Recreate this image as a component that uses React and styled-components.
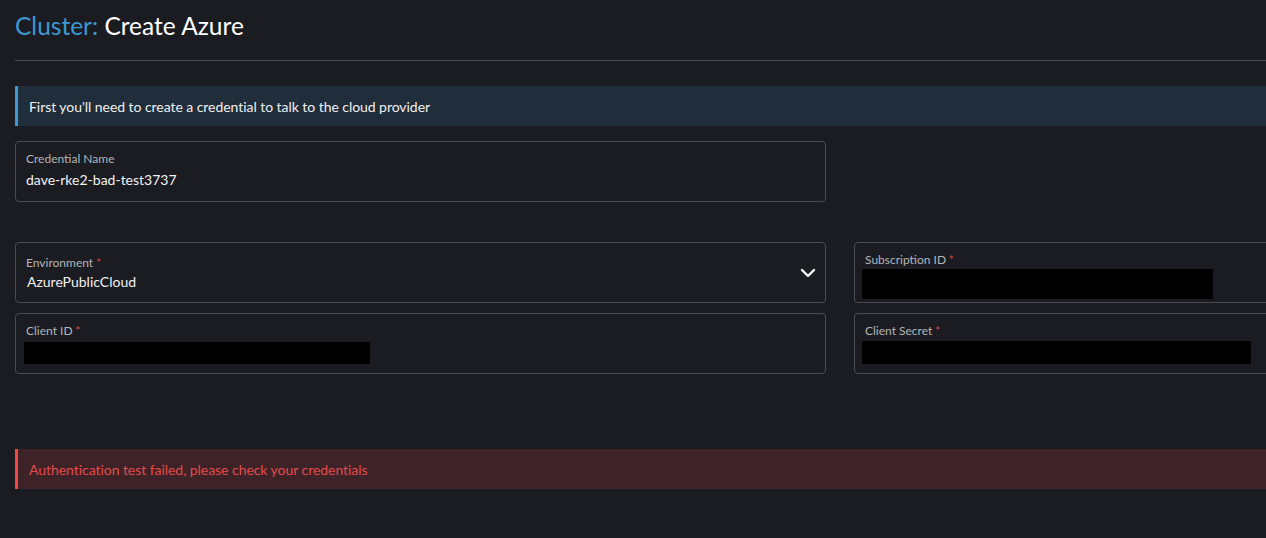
import React from "react";
import styled, { createGlobalStyle } from "styled-components";

const Global = createGlobalStyle`
  html, body { margin: 0; padding: 0; background: #1b1c21; overflow: hidden; }
  body { font-family: Lato, "Noto Sans", sans-serif; color: #e6e6e6; }
`;

const Page = styled.div`
  width: 1664px;
  padding: 0 0 0 15px;
  box-sizing: content-box;
`;

const Header = styled.header`
  height: 61px;
  box-sizing: border-box;
  padding-top: 9px;
  border-bottom: 1px solid #4a4b51;
`;

const Title = styled.h1`
  margin: 0;
  font-size: 24.5px;
  line-height: 34px;
  font-weight: 400;
  color: #ffffff;
`;

const Crumb = styled.span`
  color: #3d98d3;
`;

const Banner = styled.div`
  margin-top: ${(p) => p.$mt}px;
  height: 40px;
  box-sizing: border-box;
  display: flex;
  align-items: center;
  padding-left: 11px;
  border-left: 3px solid ${(p) => (p.$error ? "#f64747" : "#3d98d3")};
  background: ${(p) => (p.$error ? "#3d2327" : "#202d3a")};
  color: ${(p) => (p.$error ? "#e44a4a" : "#f0f0f0")};
  font-size: 14px;
  letter-spacing: -0.05px;
`;

const Row = styled.div`
  display: grid;
  grid-template-columns: 811px 811px;
  column-gap: 28px;
  margin-top: ${(p) => p.$mt}px;
`;

const Field = styled.div`
  position: relative;
  height: 61px;
  box-sizing: border-box;
  border: 1px solid #4b4c52;
  border-radius: 4px;
  padding: ${(p) => (p.$select ? 13 : 10)}px 10px 0 10px;
  display: flex;
  flex-direction: column;
`;

const Label = styled.label`
  font-size: 12px;
  line-height: 14px;
  color: #b4b5b9;
`;

const Req = styled.span`
  color: #e04848;
  margin-left: 3px;
  font-size: 11px;
  vertical-align: top;
`;

const Value = styled.div`
  margin-top: ${(p) => p.$mt}px;
  font-size: 14px;
  line-height: 20px;
  color: #f2f2f2;
  margin-left: ${(p) => p.$ml || 0}px;
`;

const Redacted = styled.div`
  background: #000;
  width: ${(p) => p.$w}px;
  height: ${(p) => p.$h}px;
  margin-top: ${(p) => p.$mt}px;
  margin-left: ${(p) => p.$ml}px;
`;

const Chevron = styled.svg`
  position: absolute;
  right: 9px;
  top: 24px;
  width: 16px;
  height: 12px;
`;

export default function App() {
  return (
    <>
      <Global />
      <Page>
        <Header>
          <Title>
            <Crumb>Cluster:</Crumb> Create Azure
          </Title>
        </Header>
        <Banner $mt={25}>First you'll need to create a credential to talk to the cloud provider</Banner>
        <Row $mt={15}>
          <Field>
            <Label>Credential Name</Label>
            <Value $mt={4}>dave-rke2-bad-test3737</Value>
          </Field>
        </Row>
        <Row $mt={40}>
          <Field $select>
            <Label>
              Environment<Req>*</Req>
            </Label>
            <Value $mt={2} $ml={1}>AzurePublicCloud</Value>
            <Chevron viewBox="0 0 16 12">
              <path d="M2 3 L8 9 L14 3" fill="none" stroke="#ffffff" strokeWidth="2.4" strokeLinecap="round" strokeLinejoin="round" />
            </Chevron>
          </Field>
          <Field>
            <Label>
              Subscription ID<Req>*</Req>
            </Label>
            <Redacted $w={351} $h={30} $mt={2} $ml={-3} />
          </Field>
        </Row>
        <Row $mt={10}>
          <Field>
            <Label>
              Client ID<Req>*</Req>
            </Label>
            <Redacted $w={346} $h={22} $mt={4} $ml={-2} />
          </Field>
          <Field>
            <Label>
              Client Secret<Req>*</Req>
            </Label>
            <Redacted $w={389} $h={23} $mt={3} $ml={-3} />
          </Field>
        </Row>
        <Banner $mt={75} $error>
          Authentication test failed, please check your credentials
        </Banner>
      </Page>
    </>
  );
}
